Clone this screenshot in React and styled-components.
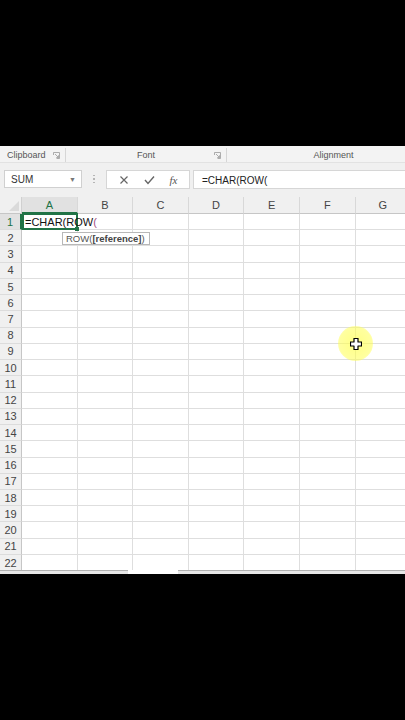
import React from "react"
import styled, { createGlobalStyle } from "styled-components"

const GlobalStyle = createGlobalStyle`
  html, body {
    margin: 0;
    padding: 0;
    background: #000;
  }
  * { box-sizing: border-box; }
`

const COLS = ["A", "B", "C", "D", "E", "F", "G"]
const ROWS = Array.from({ length: 22 }, (_, i) => i + 1)
const GREEN = "#217346"

const Screen = styled.div`
  width: 405px;
  height: 720px;
  display: flex;
  flex-direction: column;
  background: #000;
  overflow: hidden;
  font-family: "Liberation Sans", Arial, sans-serif;
`

const BlackBar = styled.div`
  height: ${({ h }) => h}px;
  flex: none;
  background: #000;
`

const Workbook = styled.div`
  flex: none;
  height: 428px;
  display: flex;
  flex-direction: column;
  background: #fff;
  overflow: hidden;
`

const RibbonLabels = styled.div`
  height: 17px;
  flex: none;
  display: flex;
  padding-top: 2px;
  background: #f3f3f3;
  border-bottom: 1px solid #e2e2e2;
`

const Group = styled.div`
  position: relative;
  width: ${({ w }) => w}px;
  flex: none;
  display: flex;
  align-items: center;
  justify-content: ${({ center }) => (center ? "center" : "flex-start")};
  padding-left: ${({ center }) => (center ? 0 : 7)}px;
  font-size: 9px;
  color: #555;
  border-right: 1px solid #d6d6d6;
`

const Launcher = styled.svg`
  position: absolute;
  right: 5px;
  top: 4px;
`

const FormulaArea = styled.div`
  height: 34px;
  flex: none;
  display: flex;
  align-items: flex-start;
  padding: 7px 0 0 4px;
  background: #f0f0f0;
`

const NameBox = styled.div`
  width: 78px;
  height: 18px;
  display: flex;
  align-items: center;
  justify-content: space-between;
  padding: 1px 5px 0 6px;
  background: #fff;
  border: 1px solid #d0d0d0;
  font-size: 10px;
  color: #333;
`

const Caret = styled.span`
  font-size: 7px;
  color: #777;
`

const Grip = styled.div`
  width: 24px;
  height: 18px;
  display: flex;
  flex-direction: column;
  align-items: center;
  justify-content: center;
  gap: 2px;
  span {
    width: 1.5px;
    height: 1.5px;
    background: #b5b5b5;
  }
`

const FxButtons = styled.div`
  width: 84px;
  height: 19px;
  display: flex;
  align-items: center;
  justify-content: space-around;
  padding: 0 4px;
  background: #fff;
  border: 1px solid #d6d6d6;
  color: #666;
`

const FxLabel = styled.span`
  font-family: "Liberation Serif", serif;
  font-style: italic;
  font-size: 11px;
  color: #555;
`

const FormulaInput = styled.div`
  flex: 1;
  margin-left: 3px;
  height: 19px;
  display: flex;
  align-items: center;
  padding: 1px 0 0 8px;
  background: #fff;
  border: 1px solid #d6d6d6;
  border-right: none;
  font-size: 10px;
  color: #222;
`

const Grid = styled.div`
  position: relative;
  flex: 1;
  display: grid;
  grid-template-columns: 22px repeat(7, 55.6px);
  grid-template-rows: 17px repeat(22, 16.24px);
  overflow: hidden;
`

const Corner = styled.div`
  position: relative;
  background: #f0f0f0;
  border-right: 1px solid #d0d0d0;
  border-bottom: 1px solid #c6c6c6;
  &::after {
    content: "";
    position: absolute;
    right: 2px;
    bottom: 2px;
    border-style: solid;
    border-width: 0 0 10px 10px;
    border-color: transparent transparent #dadada transparent;
  }
`

const ColHeader = styled.div`
  display: flex;
  align-items: center;
  justify-content: center;
  font-size: 11px;
  color: ${({ active }) => (active ? GREEN : "#444")};
  background: ${({ active }) => (active ? "#e1e1e1" : "#f0f0f0")};
  border-right: 1px solid #d8d8d8;
  border-bottom: ${({ active }) => (active ? `2px solid ${GREEN}` : "1px solid #c6c6c6")};
`

const RowHeader = styled.div`
  display: flex;
  align-items: center;
  justify-content: center;
  font-size: 11px;
  color: ${({ active }) => (active ? GREEN : "#444")};
  background: ${({ active }) => (active ? "#e1e1e1" : "#f0f0f0")};
  border-right: ${({ active }) => (active ? `2px solid ${GREEN}` : "1px solid #c6c6c6")};
  border-bottom: 1px solid #dcdcdc;
`

const Cell = styled.div`
  position: relative;
  border-right: 1px solid #dedede;
  border-bottom: 1px solid #dedede;
`

const ActiveCell = styled.div`
  position: relative;
  z-index: 2;
  display: flex;
  align-items: center;
  padding-left: 1px;
  white-space: nowrap;
  font-size: 11px;
  color: #111;
  border: 2px solid ${GREEN};
  margin: -1px 0 0 0;
`

const FillHandle = styled.span`
  position: absolute;
  right: -3px;
  bottom: -3px;
  width: 4px;
  height: 4px;
  background: ${GREEN};
  z-index: -1;
`

const Paren = styled.span`
  color: #a5507f;
`

const TextCaret = styled.span`
  display: inline-block;
  width: 1px;
  height: 12px;
  margin-left: 1px;
  background: #111;
`

const Tooltip = styled.div`
  position: absolute;
  left: 62px;
  top: 35px;
  z-index: 3;
  height: 13px;
  padding: 0 4px 0 3px;
  display: flex;
  align-items: center;
  font-size: 9.5px;
  color: #555;
  background: #fff;
  border: 1px solid #b8b8b8;
  b { font-weight: bold; color: #444; }
`

const Highlight = styled.div`
  position: absolute;
  left: 338px;
  top: 129px;
  width: 35px;
  height: 35px;
  border-radius: 50%;
  background: radial-gradient(circle, rgba(255, 255, 80, 0.7) 0%, rgba(255, 255, 80, 0.55) 65%, rgba(255, 255, 80, 0) 100%);
  display: flex;
  align-items: center;
  justify-content: center;
  z-index: 3;
`

const ScrollStrip = styled.div`
  height: 4px;
  flex: none;
  display: flex;
`

const StripPart = styled.div`
  width: ${({ w }) => (w ? `${w}px` : "auto")};
  flex: ${({ w }) => (w ? "none" : 1)};
  background: ${({ gap }) => (gap ? "#fff" : "#e6e6e6")};
  border-top: ${({ gap }) => (gap ? "none" : "1px solid #b0b0b0")};
`

const LauncherIcon = () => (
  <Launcher width="7" height="7" viewBox="0 0 7 7">
    <path d="M0.5 3 V0.5 H6.5 V6.5 H3.5" fill="none" stroke="#999" strokeWidth="0.8" />
    <path d="M2 2 L5.5 5.5 M5.5 3.3 V5.5 H3.3" fill="none" stroke="#999" strokeWidth="0.8" />
  </Launcher>
)

const App = () => {
  return (
    <Screen>
      <GlobalStyle />
      <BlackBar h={146} />
      <Workbook>
        <RibbonLabels>
          <Group w={66}>
            Clipboard
            <LauncherIcon />
          </Group>
          <Group w={161} center>
            Font
            <LauncherIcon />
          </Group>
          <Group w={214} center>
            Alignment
          </Group>
        </RibbonLabels>

        <FormulaArea>
          <NameBox>
            SUM
            <Caret>▼</Caret>
          </NameBox>
          <Grip>
            <span />
            <span />
            <span />
          </Grip>
          <FxButtons>
            <svg width="10" height="10" viewBox="0 0 10 10">
              <path d="M1.5 1.5 L8.5 8.5 M8.5 1.5 L1.5 8.5" stroke="#666" strokeWidth="1.2" />
            </svg>
            <svg width="11" height="10" viewBox="0 0 11 10">
              <path d="M1 5 L4 8.5 L10 1.5" fill="none" stroke="#666" strokeWidth="1.4" />
            </svg>
            <FxLabel>fx</FxLabel>
          </FxButtons>
          <FormulaInput>=CHAR(ROW(</FormulaInput>
        </FormulaArea>

        <Grid>
          <Corner />
          {COLS.map(c => (
            <ColHeader key={c} active={c === "A"}>
              {c}
            </ColHeader>
          ))}
          {ROWS.map(r => (
            <React.Fragment key={r}>
              <RowHeader active={r === 1}>{r}</RowHeader>
              {COLS.map(c =>
                r === 1 && c === "A" ? (
                  <ActiveCell key={c}>
                    =CHAR(ROW<Paren>(</Paren>
                    <TextCaret />
                    <FillHandle />
                  </ActiveCell>
                ) : (
                  <Cell key={c} />
                )
              )}
            </React.Fragment>
          ))}

          <Tooltip>
            ROW(<b>[reference]</b>)
          </Tooltip>

          <Highlight>
            <svg width="12" height="12" viewBox="0 0 12 12">
              <path
                d="M4 0.5 H8 V4 H11.5 V8 H8 V11.5 H4 V8 H0.5 V4 H4 Z"
                fill="#fff"
                stroke="#000"
                strokeWidth="1.2"
                strokeLinejoin="round"
              />
            </svg>
          </Highlight>
        </Grid>

        <ScrollStrip>
          <StripPart w={128} />
          <StripPart w={50} gap />
          <StripPart />
        </ScrollStrip>
      </Workbook>
      <BlackBar h={146} />
    </Screen>
  )
}

export default App
